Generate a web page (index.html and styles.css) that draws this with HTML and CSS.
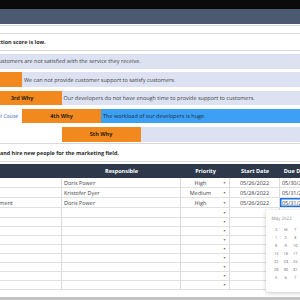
FILE: index.html
```html
<!DOCTYPE html>
<html lang="en">
<head>
  <meta charset="UTF-8" />
  <title>5 Whys Analysis</title>
  <link rel="stylesheet" href="styles.css">
</head>
<body>
  <div class="topbar"></div>
  <div class="titlebar"></div>

  <div class="sheet">
    <div class="blank-row"></div>
    <div class="problem"><span class="lead">Problem: Customer</span> satisfaction score is low.</div>

    <div class="whys">
      <div class="why-box why-1">1st Why</div>
      <div class="why-answer">Our customers are not satisfied with the service they receive.</div>

      <div class="why-box why-2">2nd Why</div>
      <div class="why-answer">We can not provide customer support to satisfy customers.</div>

      <div class="why-box why-3">3rd Why</div>
      <div class="why-answer">Our developers do not have enough time to provide support to customers.</div>

      <div class="root-label">Root Cause</div>
      <div class="why-box why-4">4th Why</div>
      <div class="why-answer root">The workload of our developers is huge.</div>

      <div class="why-box why-5">5th Why</div>
      <div class="why-answer"></div>
    </div>

    <div class="solution"><span class="lead">Solution: Expand the team</span> and hire new people for the marketing field.</div>
  </div>

  <div class="tasks">
    <div class="task-row head">
      <div class="cell">Action Plan</div>
      <div class="cell">Responsible</div>
      <div class="cell">Priority</div>
      <div class="cell">Start Date</div>
      <div class="cell">Due Date</div>
    </div>
    <div class="task-row tall">
      <div class="cell task">Hire new developers</div>
      <div class="cell name">Doris Power</div>
      <div class="cell prio"><span>High</span><i>▾</i></div>
      <div class="cell date">05/26/2022</div>
      <div class="cell date">05/30/2022</div>
    </div>
    <div class="task-row tall">
      <div class="cell task">Train support staff</div>
      <div class="cell name">Kristofer Dyer</div>
      <div class="cell prio"><span>Medium</span><i>▾</i></div>
      <div class="cell date">05/28/2022</div>
      <div class="cell date">05/31/2022</div>
    </div>
    <div class="task-row tall">
      <div class="cell task">Reorganize the customer support department</div>
      <div class="cell name">Doris Power</div>
      <div class="cell prio"><span>High</span><i>▾</i></div>
      <div class="cell date">05/26/2022</div>
      <div class="cell date selected">05/31/2022</div>
    </div>
    <div class="task-row tall">
      <div class="cell task"></div><div class="cell name"></div>
      <div class="cell prio"><span></span><i>▾</i></div>
      <div class="cell date"></div><div class="cell date"></div>
    </div>
    <div class="task-row">
      <div class="cell task"></div><div class="cell name"></div>
      <div class="cell prio"><span></span><i>▾</i></div>
      <div class="cell date"></div><div class="cell date"></div>
    </div>
    <div class="task-row">
      <div class="cell task"></div><div class="cell name"></div>
      <div class="cell prio"><span></span><i>▾</i></div>
      <div class="cell date"></div><div class="cell date"></div>
    </div>
    <div class="task-row">
      <div class="cell task"></div><div class="cell name"></div>
      <div class="cell prio"><span></span><i>▾</i></div>
      <div class="cell date"></div><div class="cell date"></div>
    </div>
    <div class="task-row">
      <div class="cell task"></div><div class="cell name"></div>
      <div class="cell prio"><span></span><i>▾</i></div>
      <div class="cell date"></div><div class="cell date"></div>
    </div>
    <div class="task-row">
      <div class="cell task"></div><div class="cell name"></div>
      <div class="cell prio"><span></span><i>▾</i></div>
      <div class="cell date"></div><div class="cell date"></div>
    </div>
    <div class="task-row">
      <div class="cell task"></div><div class="cell name"></div>
      <div class="cell prio"><span></span><i>▾</i></div>
      <div class="cell date"></div><div class="cell date"></div>
    </div>
    <div class="task-row">
      <div class="cell task"></div><div class="cell name"></div>
      <div class="cell prio"><span></span><i>▾</i></div>
      <div class="cell date"></div><div class="cell date"></div>
    </div>
    <div class="task-row">
      <div class="cell task"></div><div class="cell name"></div>
      <div class="cell prio"><span></span><i>▾</i></div>
      <div class="cell date"></div><div class="cell date"></div>
    </div>
  </div>

  <div class="footer"></div>

  <!-- date picker opened under the selected due date -->
  <div class="datepicker">
    <div class="month">May 2022</div>
    <div class="days">
      <span>S</span><span>M</span><span>T</span><span>W</span><span>T</span><span>F</span><span>S</span>
      <span>1</span><span>2</span><span>3</span><span>4</span><span>5</span><span>6</span><span>7</span>
      <span>8</span><span>9</span><span>10</span><span>11</span><span>12</span><span>13</span><span>14</span>
      <span>15</span><span>16</span><span>17</span><span>18</span><span>19</span><span>20</span><span>21</span>
      <span>22</span><span>23</span><span>24</span><span>25</span><span>26</span><span>27</span><span>28</span>
      <span>29</span><span>30</span><span>31</span><span>1</span><span>2</span><span>3</span><span>4</span>
      <span>5</span><span>6</span><span>7</span><span>8</span><span>9</span><span>10</span><span>11</span>
    </div>
  </div>
</body>
</html>
```

FILE: styles.css
```css
* {
  box-sizing: border-box;
}

html,
body {
  margin: 0;
}

body {
  position: relative;
  width: 300px;
  height: 300px;
  overflow: hidden;
  background: #fff;
  color: #434343;
  font-family: 'Open Sans', sans-serif;
  font-size: 5.5px;
  text-rendering: geometricPrecision;
}

.topbar {
  height: 9px;
  background: #0b0b0b;
}

.titlebar {
  height: 15px;
  background: #4b5a71;
}

/* the sheet starts left of the visible window */
.sheet {
  width: 396.5px;
  margin-left: -96.5px;
}

.blank-row {
  height: 9px;
  margin-top: 1px;
  border-top: 1px solid #d9d9d9;
  border-bottom: 1px solid #d9d9d9;
}

.problem,
.solution {
  display: flex;
  align-items: center;
  white-space: nowrap;
  font-weight: 700;
  font-size: 5.4px;
  color: #2b2b2b;
}

.problem {
  height: 17px;
  border-bottom: 1px solid #d9d9d9;
}

.problem .lead {
  display: inline-block;
  width: 76.5px;
  text-align: right;
}

.solution {
  height: 19px;
  margin-top: 1.5px;
  border-top: 1px solid #d9d9d9;
  border-bottom: 1px solid #d9d9d9;
}

.solution .lead {
  display: inline-block;
  width: 96.5px;
  text-align: right;
}

.whys {
  display: grid;
  grid-template-columns: repeat(6, 39.5px) 1fr;
  grid-auto-rows: 14.5px;
  row-gap: 3.75px;
  margin-top: 3px;
}

.why-box {
  display: flex;
  align-items: center;
  justify-content: center;
  background: #f2891f;
  color: #2b2211;
  font-weight: 700;
}

.why-1 { grid-column: 1 / 3; }
.why-2 { grid-column: 2 / 4; }
.why-3 { grid-column: 3 / 5; }
.why-4 { grid-column: 4 / 6; }
.why-5 { grid-column: 5 / 7; }

.why-answer {
  display: flex;
  align-items: center;
  padding-left: 2px;
  background: #dce2f2;
  font-size: 5.5px;
  white-space: nowrap;
  overflow: hidden;
}

.why-1 + .why-answer { grid-column: 3 / -1; }
.why-2 + .why-answer { grid-column: 4 / -1; }
.why-3 + .why-answer { grid-column: 5 / -1; }
.why-4 + .why-answer { grid-column: 6 / -1; }
.why-5 + .why-answer { grid-column: 7 / -1; }

.why-answer.root {
  background: #3ca1f5;
  color: #1c2a3a;
}

.root-label {
  grid-column: 1 / 4;
  display: flex;
  align-items: center;
  justify-content: flex-end;
  padding-right: 4px;
  color: #4e76b5;
  font-style: italic;
}

/* action plan table */
.tasks {
  width: 408px;
  margin-left: -107px;
  margin-top: 2px;
}

.task-row {
  display: grid;
  grid-template-columns: 169px 119px 49px 50px 33px;
  height: 9px;
  border-bottom: 1px solid #e1e1e1;
}

.task-row.tall {
  height: 10px;
}

.task-row.head {
  height: 14px;
  border-bottom: none;
  background: #2d394b;
  color: #fff;
  font-weight: 700;
}

.cell {
  display: flex;
  align-items: center;
  overflow: hidden;
  white-space: nowrap;
  border-right: 1px solid #dcdcdc;
}

.head .cell {
  justify-content: center;
  border-right: none;
  overflow: visible;
}

.cell.task,
.cell.name {
  padding-left: 2px;
}

.cell.date {
  justify-content: center;
  overflow: visible;
}

.cell.date:last-child {
  border-right: none;
}

.cell.prio span {
  flex: 1;
  text-align: center;
}

.cell.prio i {
  width: 9px;
  font-style: normal;
  font-size: 4px;
  color: #777;
  text-align: center;
}

.cell.selected {
  box-shadow: inset 0 0 0 1.5px #1a73e8;
}

.footer {
  height: 3px;
  margin-top: 7px;
  background: #c3c3c3;
}

.datepicker {
  position: absolute;
  left: 266px;
  top: 210px;
  width: 80px;
  height: 82px;
  padding: 6px 4px 0 5.5px;
  background: #fff;
  border-radius: 2px;
  box-shadow: 0 1px 4px rgba(0, 0, 0, 0.22);
  color: #8a8a8a;
}

.month {
  font-size: 4.5px;
  margin-bottom: 6px;
}

.days {
  display: grid;
  grid-template-columns: repeat(7, 9.5px);
  grid-auto-rows: 8px;
  font-size: 4px;
  color: #6b6b6b;
}

.days span {
  text-align: center;
}
```
